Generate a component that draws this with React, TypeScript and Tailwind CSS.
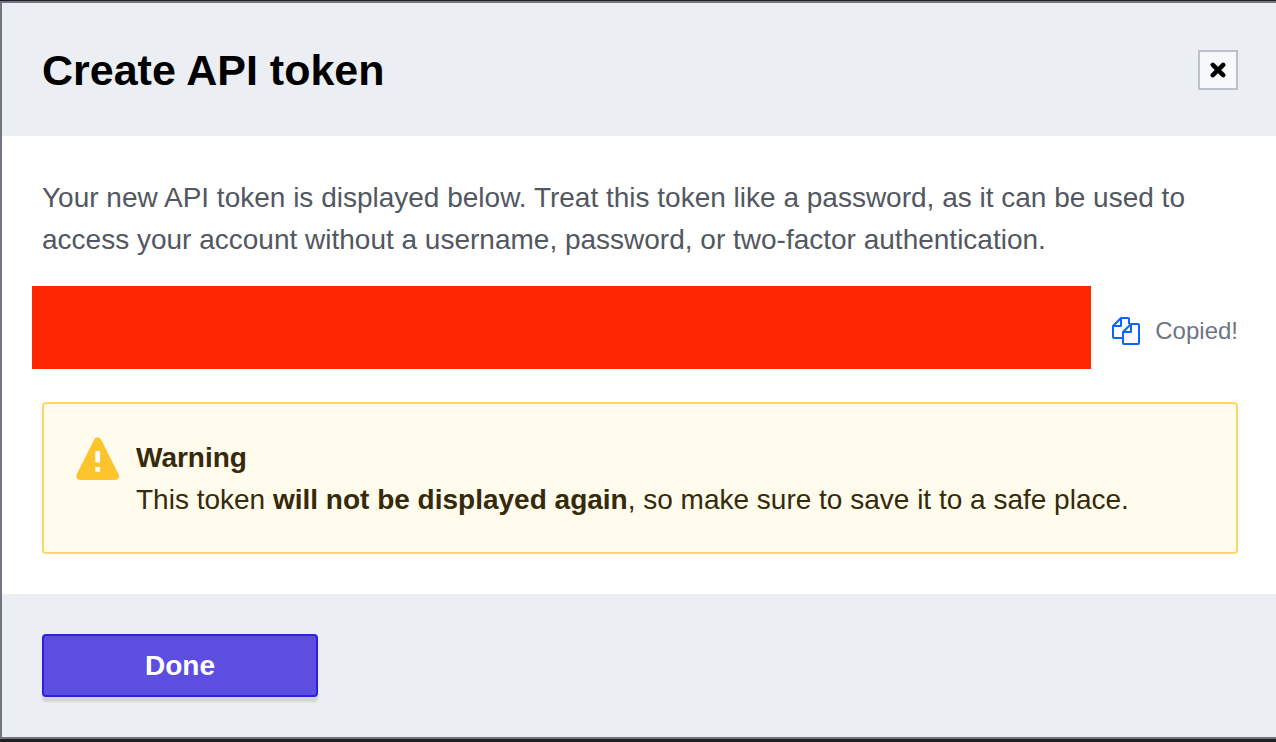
import React from 'react';

interface ModalProps {
  title: string;
  children: React.ReactNode;
  footer: React.ReactNode;
}

const CopyIcon: React.FC = () => (
  <svg className="h-[28px] w-[28px] shrink-0" viewBox="0 0 28 28" fill="none" stroke="#0f62fe" strokeWidth="2" strokeLinejoin="round" aria-hidden="true">
    <path d="M11 21H2a1 1 0 0 1-1-1V9l8-8h7a1 1 0 0 1 1 1v5" />
    <path d="M9 1v8H1" />
    <path d="M19 7h7a1 1 0 0 1 1 1v18a1 1 0 0 1-1 1H12a1 1 0 0 1-1-1V15z" />
    <path d="M19 7v8h-8" />
  </svg>
);

const WarningIcon: React.FC = () => (
  <svg className="h-[44px] w-[44px] shrink-0" viewBox="0 0 44 44" aria-hidden="true">
    <path d="M21.7 4.5 39 39H4.4z" fill="#fcc42d" stroke="#fcc42d" strokeWidth="8" strokeLinejoin="round" />
    <rect x="19.3" y="14" width="4.8" height="11.6" rx="1.2" fill="#fff" />
    <rect x="19.3" y="30" width="4.8" height="4.8" fill="#fff" />
  </svg>
);

const Modal: React.FC<ModalProps> = ({ title, children, footer }) => {
  return (
    <div className="flex min-h-screen flex-col bg-[#231f20] pt-px pb-[3px]">
      <section className="flex grow flex-col border-y-2 border-l-2 border-[#6f7682] bg-white" role="dialog" aria-label={title}>
        <header className="flex items-center justify-between bg-[#ebeef3] pt-[47px] pr-[38px] pb-[46px] pl-10">
          <h2 className="text-[43px] leading-[38px] font-bold text-black">{title}</h2>
          <button type="button" aria-label="Close" className="flex h-10 w-10 items-center justify-center border-2 border-[#bac1cc] bg-[#f7f8fa]">
            <svg className="h-4 w-4" viewBox="0 0 16 16" stroke="#000" strokeWidth="4.5" strokeLinecap="round" aria-hidden="true">
              <path d="m2.8 2.8 10.4 10.4M13.2 2.8 2.8 13.2" />
            </svg>
          </button>
        </header>
        <div className="grow pt-[41px] pr-[38px] pb-10 pl-10">{children}</div>
        <footer className="bg-[#ebeef3] p-10">{footer}</footer>
      </section>
    </div>
  );
};

const App: React.FC = () => {
  return (
    <main className="font-['Liberation_Sans',Arial,sans-serif]">
      <Modal
        title="Create API token"
        footer={
          <button type="button" className="block h-[63px] w-[276px] rounded-sm border-2 border-[#2e20db] bg-[#5c4ee0] text-[28px] font-bold text-white shadow-[0_5px_2px_rgba(37,41,55,0.12)]">
            Done
          </button>
        }
      >
        <p className="text-[28px] leading-[42px] text-[#525761]">
          Your new API token is displayed below. Treat this token like a password, as it can be used to access your account without a username, password, or two-factor authentication.
        </p>

        {/* Token and copy button */}
        <div className="mt-[25px] -ml-[10px] flex items-center gap-[21px]">
          <div className="h-[83px] grow bg-[#ff2600]" />
          <button type="button" className="flex items-center gap-[15px] pt-1.5 text-[24px] text-[#6f7682]">
            <CopyIcon />
            Copied!
          </button>
        </div>

        <div role="alert" className="mt-[33px] flex gap-4 rounded-sm border-2 border-[#fcd867] bg-[#fffbed] px-8 pt-[33px] pb-[31px]">
          <WarningIcon />
          <div className="text-[28px] leading-[42px] text-[#352a09]">
            <h3 className="font-bold">Warning</h3>
            <p>
              This token <strong>will not be displayed again</strong>, so make sure to save it to a safe place.
            </p>
          </div>
        </div>
      </Modal>
    </main>
  );
};

export default App;
